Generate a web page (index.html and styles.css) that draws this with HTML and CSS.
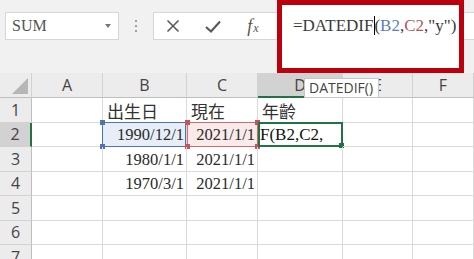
FILE: index.html
```html
<!DOCTYPE html>
<html>
<head>
 <title>DATEDIF</title>
 <link rel="stylesheet" href="styles.css">
</head>
<body>
 <div class="app">
  <div class="toolbar">
   <div class="namebox">
    <span class="name">SUM</span>
    <span class="arrow"></span>
   </div>
   <div class="grip"><i></i><i></i><i></i></div>
   <div class="fbar">
    <span class="fbtn">
     <svg width="14" height="14" viewBox="0 0 14 14"><path d="M1.5 1.5L12.5 12.5M12.5 1.5L1.5 12.5" stroke="#5a5a5a" stroke-width="1.6" fill="none"/></svg>
    </span>
    <span class="fbtn">
     <svg width="18" height="15" viewBox="0 0 18 15"><path d="M2 8L7 12.5L16 2.5" stroke="#5a5a5a" stroke-width="2.2" fill="none"/></svg>
    </span>
    <span class="fbtn fx"><i>f</i><small>x</small></span>
   </div>
  </div>

  <div class="callout">
   =DATEDIF<span class="caret"></span>(<span class="rb">B2</span>,<span class="rc">C2</span>,"y")
  </div>

  <div class="sheet">
   <div class="hd corner"><span class="tri"></span></div>
   <div class="hd">A</div>
   <div class="hd">B</div>
   <div class="hd">C</div>
   <div class="hd hd-on">D</div>
   <div class="hd">E</div>
   <div class="hd">F</div>

   <div class="rh">1</div>
   <div class="c"></div>
   <div class="c cjk">出生日</div>
   <div class="c cjk">現在</div>
   <div class="c cjk">年齡</div>
   <div class="c"></div>
   <div class="c"></div>

   <div class="rh rh-on">2</div>
   <div class="c"></div>
   <div class="c num sel-b">1990/12/1<span class="mark mark-b"><b class="tl"></b><b class="bl"></b></span></div>
   <div class="c num sel-c">2021/1/1<span class="mark mark-c"><b class="tl"></b><b class="bl"></b><b class="tr"></b><b class="br"></b></span></div>
   <div class="c edit">F(B2,C2,<span class="mark mark-d"><b class="br"></b></span></div>
   <div class="c"></div>
   <div class="c"></div>

   <div class="rh">3</div>
   <div class="c"></div>
   <div class="c num">1980/1/1</div>
   <div class="c num">2021/1/1</div>
   <div class="c"></div>
   <div class="c"></div>
   <div class="c"></div>

   <div class="rh">4</div>
   <div class="c"></div>
   <div class="c num">1970/3/1</div>
   <div class="c num">2021/1/1</div>
   <div class="c"></div>
   <div class="c"></div>
   <div class="c"></div>

   <div class="rh">5</div>
   <div class="c"></div><div class="c"></div><div class="c"></div><div class="c"></div><div class="c"></div><div class="c"></div>
   <div class="rh">6</div>
   <div class="c"></div><div class="c"></div><div class="c"></div><div class="c"></div><div class="c"></div><div class="c"></div>
   <div class="rh rh-last">7</div>
   <div class="c"></div><div class="c"></div><div class="c"></div><div class="c"></div><div class="c"></div><div class="c"></div>
  </div>

  <div class="tip">DATEDIF()</div>
 </div>
</body>
</html>
```

FILE: styles.css
```css
html, body { margin:0; padding:0; }
body { background:#fff; }

.app { position:relative; width:474px; height:259px; overflow:hidden; background:#f1f1f1; }

/* formula bar */
.toolbar { height:73px; box-sizing:border-box; padding-top:12px; display:flex; align-items:flex-start; }
.namebox { margin-left:5px; width:114px; height:28px; box-sizing:border-box; background:#fff; border:1px solid #d6d6d6;
  display:flex; align-items:center; justify-content:space-between; padding:0 7px 0 6px; }
.name { font-family:"Liberation Serif", serif; font-size:16px; color:#555; }
.arrow { width:0; height:0; border-left:3px solid transparent; border-right:3px solid transparent; border-top:4px solid #777; }
.grip { width:34px; height:28px; display:flex; flex-direction:column; align-items:center; justify-content:center; gap:3px; }
.grip i { display:block; width:2px; height:2px; background:#a0a0a0; }
.fbar { flex:1; height:28px; box-sizing:border-box; background:#fff; border:1px solid #d6d6d6; border-right:none;
  display:flex; align-items:center; }
.fbtn { width:41px; display:flex; justify-content:center; align-items:center; }
.fbtn:first-child { width:38px; }
.fx { width:40px; font-family:"Liberation Serif", serif; color:#555; font-size:18px; }
.fx i { font-style:italic; }
.fx small { font-size:12px; font-style:italic; margin-left:1px; position:relative; top:2px; }

/* red annotation box */
.callout { position:absolute; left:277px; top:0; width:187px; height:73px; box-sizing:border-box;
  border:5px solid #bd000d; background:#fff; padding:11px 0 0 11px;
  font-family:"Liberation Serif", serif; font-size:17px; line-height:20px; color:#3a3a3a; white-space:nowrap; }
.caret { display:inline-block; width:1px; height:19px; background:#000; vertical-align:-4px; margin:0 -1px 0 1px; }
.rb { color:#5a7fbb; }
.rc { color:#b5575a; }

/* grid */
.sheet { display:grid; background:#fff;
  grid-template-columns:32px 71px 84px 71px 85px 70px 61px;
  grid-template-rows:25px repeat(7, 24.5px); }
.hd { background:#ececec; border-right:1px solid #d2d2d2; border-bottom:1px solid #bfbfbf; box-sizing:border-box;
  display:flex; align-items:center; justify-content:center;
  font-family:"Open Sans", sans-serif; font-size:16px; color:#444; }
.hd-on { background:#d2d2d2; border-bottom:2px solid #217346; }
.corner { position:relative; }
.tri { position:absolute; right:3px; bottom:3px; width:0; height:0;
  border-left:16px solid transparent; border-bottom:16px solid #b6b6b6; }
.rh { background:#ececec; border-right:1px solid #bfbfbf; border-bottom:1px solid #d2d2d2; box-sizing:border-box;
  display:flex; align-items:center; justify-content:center;
  font-family:"Open Sans", sans-serif; font-size:16px; color:#444; }
.rh-on { background:#d2d2d2; border-right:2px solid #217346; }
.rh-last { align-items:flex-start; padding-top:1px; }

.c { position:relative; box-sizing:border-box; border-right:1px solid #dadada; border-bottom:1px solid #dadada;
  display:flex; align-items:flex-end; padding:0 2px 1px 3px;
  font-family:"Liberation Serif", serif; font-size:16.5px; line-height:20px; color:#2a2a2a; white-space:nowrap; }
.num { justify-content:flex-end; }
.cjk { font-family:"Noto Sans CJK TC", sans-serif; font-size:17px; line-height:22px; padding-bottom:0; padding-left:4px; color:#333; }
.edit { font-size:17px; color:#111; padding-left:2px; }

.sel-b { background:#e8eef8; }
.sel-c { background:#fbeaea; }

.mark { position:absolute; left:-1px; top:-1px; right:-1px; bottom:-1px; border:1.5px solid; pointer-events:none; }
.mark-b { border-color:#4a74b6; right:0; }
.mark-c { border-color:#d06a6e; left:0; }
.mark-d { border:2px solid #217346; left:0; }
.mark b { position:absolute; width:5px; height:5px; }
.mark-b b { background:#4a74b6; }
.mark-c b { background:#c8525a; }
.mark-d b { background:#217346; }
.mark .tl { left:-3px; top:-3px; }
.mark .bl { left:-3px; bottom:-3px; }
.mark .tr { right:-3px; top:-3px; }
.mark .br { right:-3px; bottom:-3px; }

/* function tooltip */
.tip { position:absolute; left:304px; top:78px; width:75px; height:20px; box-sizing:border-box;
  background:#fff; border:1px solid #c6c6c6; padding-left:4px;
  font-family:"Open Sans", sans-serif; font-size:14px; line-height:18px; color:#444; white-space:nowrap; }
```
